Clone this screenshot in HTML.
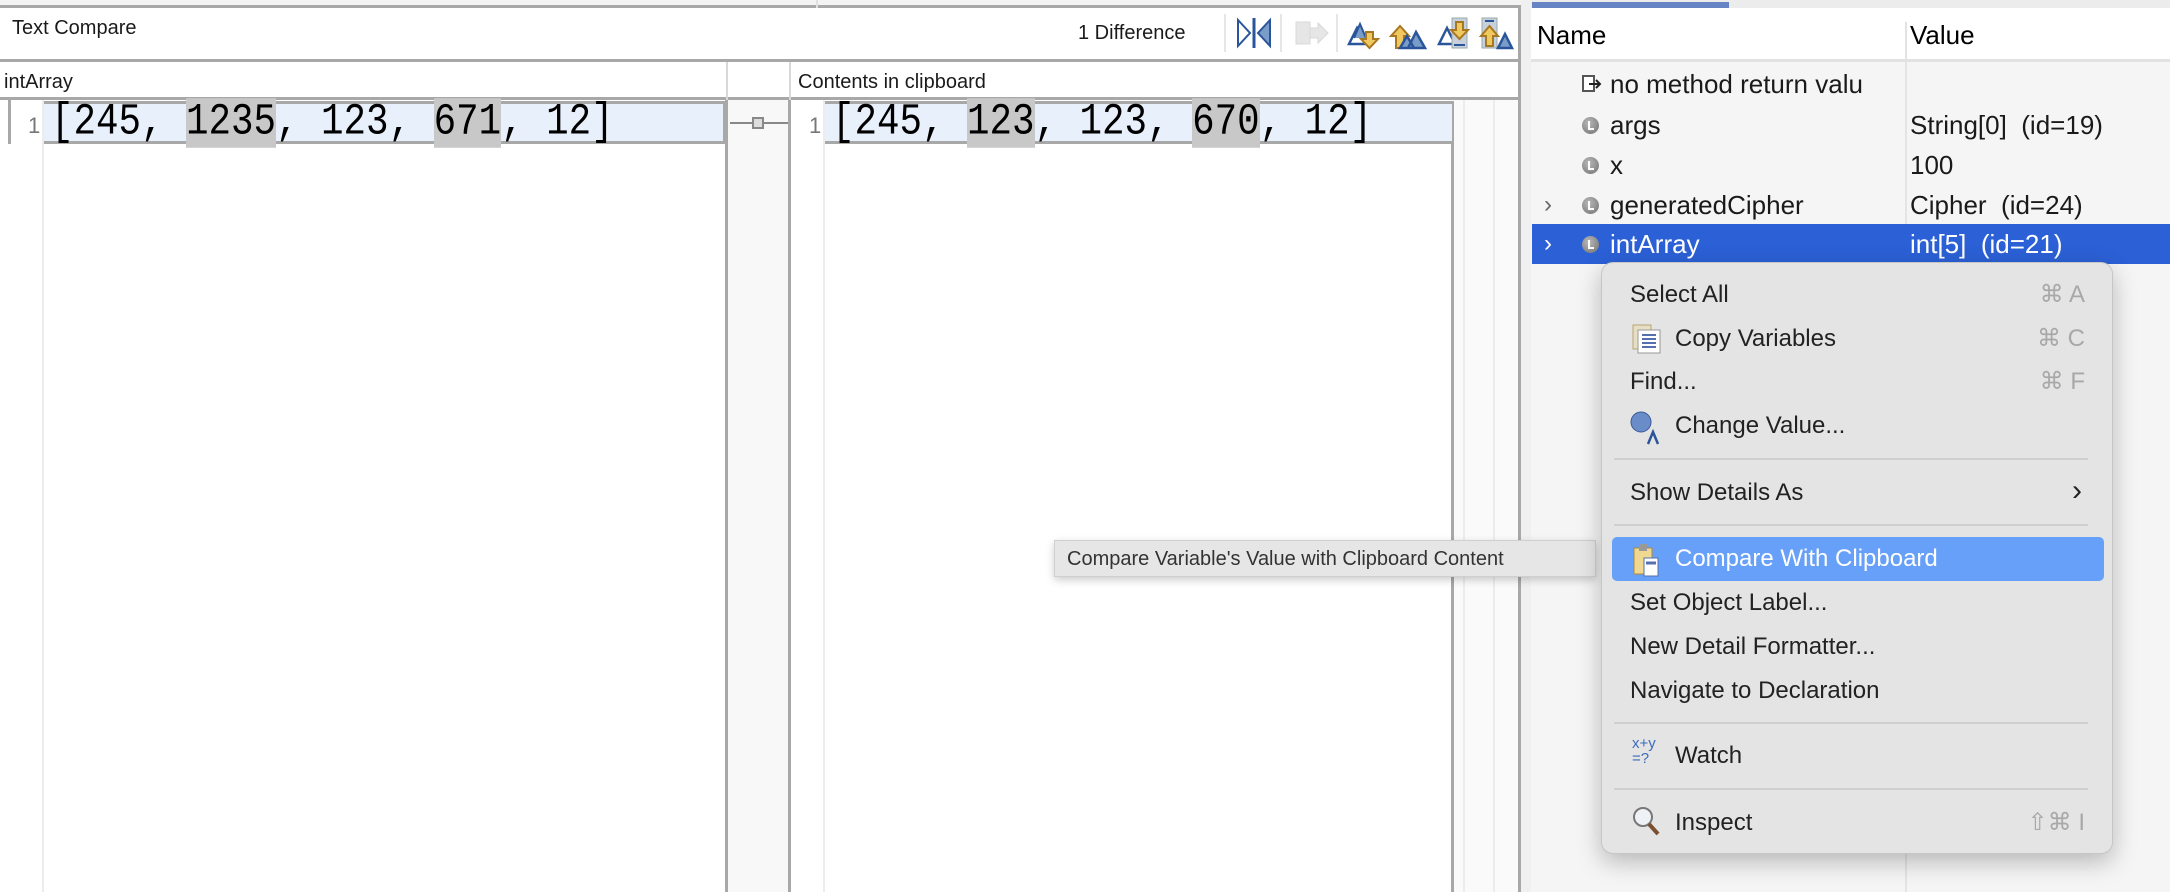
<!DOCTYPE html>
<html><head><meta charset="utf-8"><style>
*{box-sizing:border-box;margin:0;padding:0}
body{width:2170px;height:892px;overflow:hidden;background:#fff;font-family:"Liberation Sans",sans-serif;color:#1a1a1a;position:relative}
.a{position:absolute}
.mono{font-family:"Liberation Mono",monospace;font-size:37.5px;color:#000;display:inline-block;transform:scaleY(1.18);transform-origin:0 50%;white-space:pre;line-height:36px}
.hl{background:#c8c8c8}
.mi{position:absolute;left:1630px;font-size:24px;color:#222;line-height:30px}
.mi.ic{left:1675px}
.sc{position:absolute;right:85px;font-size:24px;color:#a8a8a8}
.sep{position:absolute;left:1614px;width:474px;height:2px;background:#cfcfcf}
.row{position:absolute;left:1532px;width:638px;height:40px;font-size:26px;line-height:40px}
.row .n{position:absolute;left:78px}
.row .v{position:absolute;left:378px}
.L{position:absolute;left:50px;top:12px;width:17px;height:17px;border-radius:50%;background:radial-gradient(circle at 40% 35%,#b8b8b8,#707070);}
.L:after{content:"";position:absolute;left:6px;top:4px;width:4px;height:7px;border-left:2px solid #fff;border-bottom:2px solid #fff}
.chev{position:absolute;left:12px;font-size:24px;color:#666}
</style></head><body>
<div class="a" style="left:0;top:0;width:1530px;height:8px;background:#f3f3f3;border-bottom:3px solid #a8a8a8"></div>
<div class="a" style="left:816px;top:0;width:2px;height:8px;background:#e0e0e0"></div>
<div class="a" style="left:12px;top:17px;font-size:20px">Text Compare</div>
<div class="a" style="left:1078px;top:22px;font-size:20px">1 Difference</div>
<div class="a" style="left:1224px;top:14px;width:2px;height:38px;background:#e6e6e6"></div>
<div class="a" style="left:1280px;top:14px;width:2px;height:38px;background:#e6e6e6"></div>
<div class="a" style="left:1336px;top:14px;width:2px;height:38px;background:#e6e6e6"></div>
<svg class="a" style="left:1230px;top:14px" width="290" height="38" viewBox="0 0 290 38">
 <g stroke="#2a559a" stroke-width="2" fill="none">
  <path d="M8 6 L20 19 L8 32 Z"/><path d="M24 4 V34" stroke-width="3"/><path d="M40 6 L28 19 L40 32 Z" fill="#7a9cc8"/>
 </g>
 <g fill="#e6e6e6" stroke="#d8d8d8"><rect x="66" y="8" width="14" height="22"/><path d="M80 14 h8 v-5 l10 10 l-10 10 v-5 h-8z"/></g>
 <path d="M119 30 L127 14 L135 30 Z" stroke="#2a559a" stroke-width="2.5" fill="none"/>
 <path d="M124 24 L130 10 L136 24" stroke="#2a559a" stroke-width="2" fill="#7a9cc8"/>
 <path d="M136 18 h7 v7 h5 l-8.5 9 l-8.5 -9 h5z" fill="#f0c860" stroke="#a87820" stroke-width="2"/>
 <path d="M166 34 v-12 h-5 l9 -10 l9 10 h-5 v12z" fill="#f0c860" stroke="#a87820" stroke-width="2"/>
 <path d="M170 34 L177 22 L184 34Z M178 34 L186 18 L195 34Z" stroke="#2a559a" stroke-width="2.5" fill="#7a9cc8"/>
 <path d="M209 30 L217 14 L225 30 Z" stroke="#2a559a" stroke-width="2.5" fill="none"/>
 <rect x="222" y="4" width="15" height="30" fill="#c8d0dc" stroke="#9aa"/>
 <path d="M226 8 h7 v8 h5 l-8.5 9 l-8.5 -9 h5z" fill="#f0c860" stroke="#a87820" stroke-width="2"/>
 <path d="M224 31h11" stroke="#2a559a" stroke-width="2"/>
 <rect x="252" y="4" width="15" height="30" fill="#c8d0dc" stroke="#9aa"/>
 <path d="M255 7h9" stroke="#2a559a" stroke-width="2"/>
 <path d="M256 32 v-10 h-5 l8.5 -10 l8.5 10 h-5 v10z" fill="#f0c860" stroke="#a87820" stroke-width="2"/>
 <path d="M268 34 L275 20 L282 34Z" stroke="#2a559a" stroke-width="2.5" fill="#7a9cc8"/>
</svg>
<div class="a" style="left:0;top:59px;width:1520px;height:3px;background:#a8a8a8"></div>
<div class="a" style="left:1518px;top:8px;width:3px;height:884px;background:#a8a8a8"></div>
<div class="a" style="left:1521px;top:0;width:10px;height:892px;background:#f0f0f0"></div>
<div class="a" style="left:0;top:62px;width:1518px;height:38px;border-bottom:3px solid #a8a8a8"></div>
<div class="a" style="left:726px;top:62px;width:2px;height:38px;background:#d8d8d8"></div>
<div class="a" style="left:789px;top:62px;width:2px;height:38px;background:#d8d8d8"></div>
<div class="a" style="left:4px;top:71px;font-size:20px">intArray</div>
<div class="a" style="left:798px;top:71px;font-size:20px">Contents in clipboard</div>
<div class="a" style="left:8px;top:100px;width:3px;height:44px;background:#a8a8a8"></div>
<div class="a" style="left:11px;top:100px;width:33px;height:792px;background:#fff;border-right:2px solid #ececec"></div>
<div class="a" style="left:44px;top:101px;width:682px;height:43px;background:#e8f0fc;border:3px solid #a8a8a8;border-left:none"></div>
<div class="a" style="left:28px;top:113px;font-size:22px;color:#777">1</div>
<div class="a" style="left:51px;top:105px"><span class="mono">[245, <span class="hl">1235</span>, 123, <span class="hl">671</span>, 12]</span></div>
<div class="a" style="left:725px;top:100px;width:3px;height:792px;background:#a8a8a8"></div>
<div class="a" style="left:728px;top:100px;width:62px;height:792px;background:#f8f8f8"></div>
<div class="a" style="left:730px;top:122px;width:58px;height:2px;background:#888"></div>
<div class="a" style="left:752px;top:117px;width:12px;height:12px;background:#ddd;border:2px solid #888"></div>
<div class="a" style="left:788px;top:100px;width:3px;height:792px;background:#a8a8a8"></div>
<div class="a" style="left:791px;top:100px;width:34px;height:792px;background:#fff;border-right:2px solid #ececec"></div>
<div class="a" style="left:825px;top:101px;width:630px;height:43px;background:#e8f0fc;border:3px solid #a8a8a8;border-left:none"></div>
<div class="a" style="left:809px;top:113px;font-size:22px;color:#777">1</div>
<div class="a" style="left:832px;top:105px"><span class="mono">[245, <span class="hl">123</span>, 123, <span class="hl">670</span>, 12]</span></div>
<div class="a" style="left:1451px;top:144px;width:3px;height:748px;background:#a8a8a8"></div>
<div class="a" style="left:1454px;top:100px;width:64px;height:792px;background:#fafafa"></div>
<div class="a" style="left:1463px;top:100px;width:2px;height:792px;background:#ececec"></div>
<div class="a" style="left:1493px;top:100px;width:2px;height:792px;background:#ececec"></div>
<div class="a" style="left:1531px;top:0;width:639px;height:892px;background:#f5f5f5"></div>
<div class="a" style="left:1531px;top:0;width:639px;height:8px;background:#ececec"></div>
<div class="a" style="left:1532px;top:2px;width:197px;height:6px;background:#6684c4"></div>
<div class="a" style="left:1531px;top:8px;width:639px;height:54px;background:#fff;border-bottom:3px solid #e2e2e2"></div>
<div class="a" style="left:1537px;top:20px;font-size:26px;color:#000">Name</div>
<div class="a" style="left:1910px;top:20px;font-size:26px;color:#000">Value</div>
<div class="a" style="left:1905px;top:22px;width:2px;height:42px;background:#e2e2e2"></div>
<div class="a" style="left:1905px;top:62px;width:2px;height:830px;background:#e4e4e4"></div>
<div class="row" style="top:64px"><svg class="a" style="left:50px;top:11px" width="22" height="18"><rect x="1" y="1" width="11" height="15" fill="#fff" stroke="#555" stroke-width="2"/><path d="M7 9h11M14 5l4 4-4 4" stroke="#222" stroke-width="2" fill="none"/></svg><span class="n">no method return valu</span></div>
<div class="row" style="top:105px"><i class="L"></i><span class="n">args</span><span class="v">String[0]&nbsp; (id=19)</span></div>
<div class="row" style="top:145px"><i class="L"></i><span class="n">x</span><span class="v">100</span></div>
<div class="row" style="top:185px"><span class="chev">›</span><i class="L"></i><span class="n">generatedCipher</span><span class="v">Cipher&nbsp; (id=24)</span></div>
<div class="row" style="top:224px;background:#2b60d6;color:#fff"><span class="chev" style="color:#fff">›</span><i class="L"></i><span class="n">intArray</span><span class="v">int[5]&nbsp; (id=21)</span></div>
<div class="a" style="left:1054px;top:540px;width:542px;height:37px;background:#e6e6e6;border:1px solid #cfcfcf;box-shadow:0 3px 8px rgba(0,0,0,.2);font-size:20px;color:#333;padding:7px 0 0 12px">Compare Variable's Value with Clipboard Content</div>
<div class="a" style="left:1601px;top:262px;width:512px;height:592px;background:#e4e4e4;border:1px solid #c6c6c6;border-radius:12px;box-shadow:0 8px 24px rgba(0,0,0,.25)"></div>
<div class="a" style="left:1612px;top:537px;width:492px;height:44px;background:#67a0f8;border-radius:5px"></div>
<div class="mi" style="top:280px">Select All</div><div class="sc" style="top:280px">⌘ A</div>
<svg class="a" style="left:1632px;top:324px" width="30" height="30"><rect x="1" y="1" width="18" height="24" fill="#e6dfc6" stroke="#b8a670"/><rect x="6" y="6" width="22" height="23" fill="#fff" stroke="#999"/><path d="M10 11h14M10 15h14M10 19h14M10 23h14" stroke="#5570b0" stroke-width="2"/></svg>
<div class="mi ic" style="top:324px">Copy Variables</div><div class="sc" style="top:324px">⌘ C</div>
<div class="mi" style="top:367px">Find...</div><div class="sc" style="top:367px">⌘ F</div>
<svg class="a" style="left:1630px;top:410px" width="32" height="36"><circle cx="11" cy="12" r="10" fill="#6a8cc8" stroke="#3a5a98"/><path d="M18 34 L23 22 L28 34" stroke="#2a559a" stroke-width="2.5" fill="none"/></svg>
<div class="mi ic" style="top:411px">Change Value...</div>
<div class="sep" style="top:458px"></div>
<div class="mi" style="top:478px">Show Details As</div><div class="a" style="left:2072px;top:474px;font-size:30px;color:#222">›</div>
<div class="sep" style="top:524px"></div>
<svg class="a" style="left:1632px;top:542px" width="30" height="36"><rect x="2" y="6" width="18" height="26" fill="#f0d890" stroke="#a88a40"/><rect x="7" y="2" width="8" height="7" fill="#999"/><rect x="12" y="16" width="14" height="18" fill="#fff" stroke="#5570b0"/><path d="M14 21h10" stroke="#5570b0" stroke-width="3"/></svg>
<div class="mi ic" style="top:544px;color:#fff">Compare With Clipboard</div>
<div class="mi" style="top:588px">Set Object Label...</div>
<div class="mi" style="top:632px">New Detail Formatter...</div>
<div class="mi" style="top:676px">Navigate to Declaration</div>
<div class="sep" style="top:722px"></div>
<div class="a" style="left:1632px;top:736px;font-size:15px;color:#3a6cc0;line-height:15px">x+y<br>=?</div>
<div class="mi ic" style="top:741px">Watch</div>
<div class="sep" style="top:788px"></div>
<svg class="a" style="left:1632px;top:806px" width="30" height="32"><circle cx="11" cy="11" r="9" fill="#eef2f6" stroke="#777" stroke-width="2"/><path d="M17 18 L26 28" stroke="#7a5030" stroke-width="4"/></svg>
<div class="mi ic" style="top:808px">Inspect</div><div class="sc" style="top:808px">⇧⌘ I</div>
</body></html>
